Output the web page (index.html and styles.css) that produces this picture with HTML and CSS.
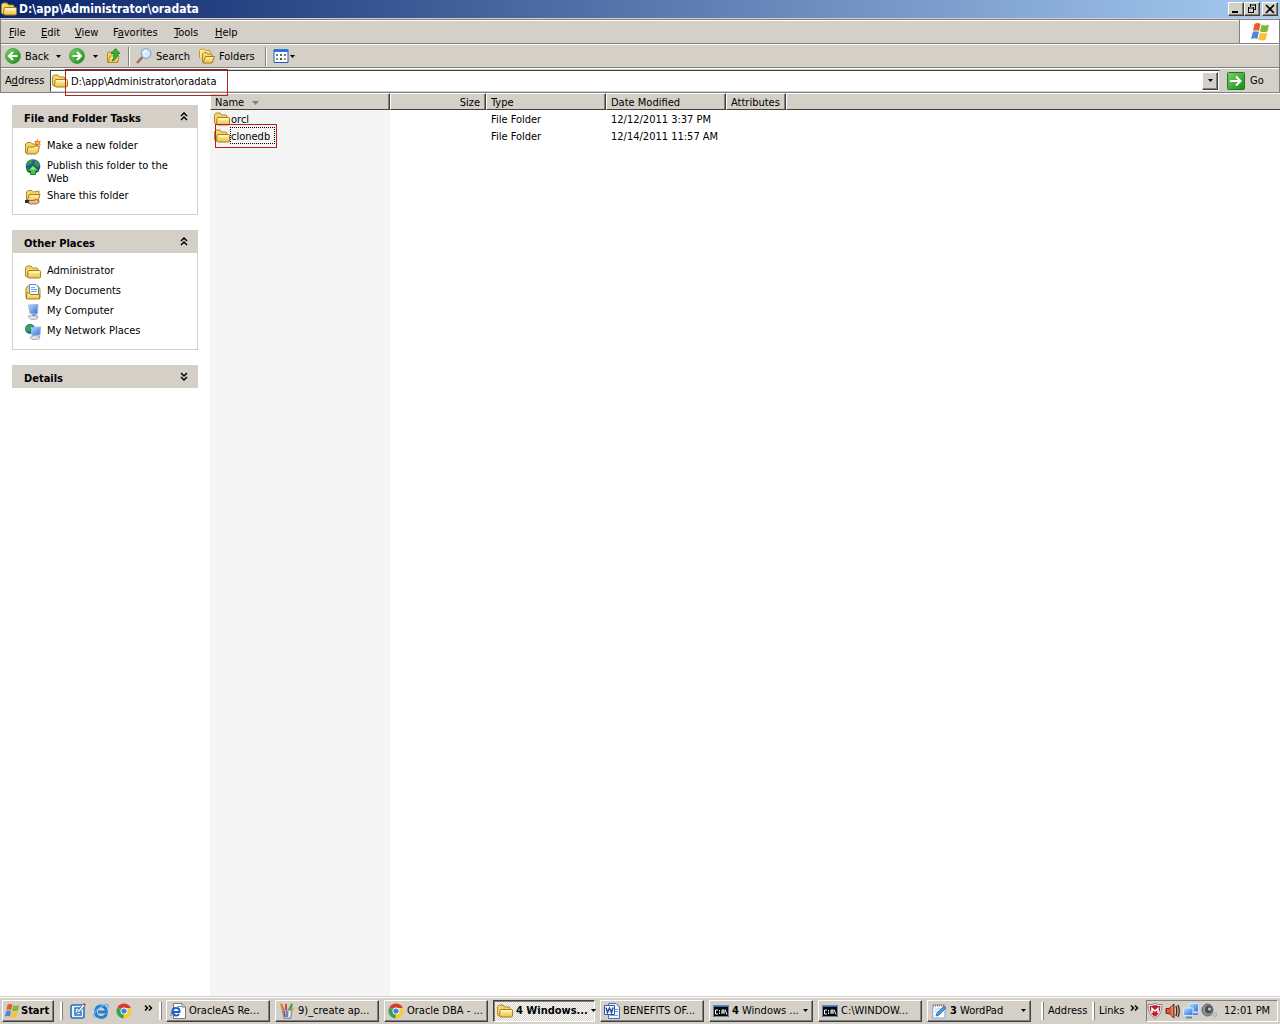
FILE: index.html
```html
<!DOCTYPE html>
<html lang="en">
<head>
<meta charset="utf-8">
<title>D:\app\Administrator\oradata</title>
<link rel="stylesheet" href="styles.css">
</head>
<body>
<svg class="defs" aria-hidden="true">
  <defs>
    <linearGradient id="gold" x1="0" y1="0" x2="0" y2="1"><stop offset="0" stop-color="#fff6a8"/><stop offset="1" stop-color="#eec04c"/></linearGradient>
    <linearGradient id="green" x1="0" y1="0" x2="1" y2="1"><stop offset="0" stop-color="#7fd06a"/><stop offset="1" stop-color="#138a18"/></linearGradient>
    <linearGradient id="screen" x1="0" y1="0" x2="1" y2="1"><stop offset="0" stop-color="#b8dcff"/><stop offset="1" stop-color="#2a6fe0"/></linearGradient>
  </defs>
  <symbol id="folder" viewBox="0 0 16 16">
    <path d="M.5 12V3.500L2 2H6l1.500 2H12l1 1v8H2z" fill="#f3d569" stroke="#b18a2c"/>
    <path d="M3 7.500Q3 6.500 4 6.500H14.500Q15.500 6.500 15.500 7.500V13L14.500 14H4L2.500 13z" fill="url(#gold)" stroke="#a87c1e"/>
    <path d="M4 8h10" stroke="#fffbd8"/>
  </symbol>
  <symbol id="folder-open" viewBox="0 0 16 16">
    <path d="M1 13V4l1.500-1.500H6L7.500 4H12v3" fill="#f3d569" stroke="#b18a2c"/>
    <path d="M1.500 14L4.500 7H15l-2.500 7z" fill="url(#gold)" stroke="#a87c1e"/>
  </symbol>
  <symbol id="folders" viewBox="0 0 16 16">
    <path d="M.5 10V2.500L2 1h3l1.500 1.500H11V5" fill="#fbe88c" stroke="#c59a35"/>
    <path d="M3.500 14V6L5 4.500h2.500L9 6h4v2" fill="#f3d569" stroke="#b18a2c"/>
    <path d="M4 15l2.500-6.500H15.500L13 15z" fill="url(#gold)" stroke="#a87c1e"/>
  </symbol>
  <symbol id="folder-new" viewBox="0 0 16 16">
    <path d="M.5 14V5L2 3.500h4L7.500 5H12v3" fill="#f3d569" stroke="#b18a2c"/>
    <path d="M1.500 15L3 8h6l1-1h4.500L13 13l-2 2z" fill="url(#gold)" stroke="#a87c1e"/>
    <path d="M12.500 0l1 2.300L16 2l-1.500 2L16 6l-2.500-.4L12.500 8l-1-2.400L9 6l1.500-2L9 2l2.500.3z" fill="#f0641e"/>
    <circle cx="12.500" cy="4" r="1.300" fill="#ffd23c"/>
  </symbol>
  <symbol id="folder-share" viewBox="0 0 16 16">
    <path d="M1.500 11V3L3 1.500h4L8.500 3 14 2v4" fill="#f3d569" stroke="#b18a2c"/>
    <path d="M2 12L4.500 5.500H15L13 12z" fill="url(#gold)" stroke="#a87c1e"/>
    <path d="M3 11.500h5l3-1 3 1v2L11 15H5l-2-1z" fill="#f1b98a" stroke="#8a5428" stroke-width=".8"/>
    <path d="M0 11h4v3H0z" fill="#27313f"/>
  </symbol>
  <symbol id="globe-up" viewBox="0 0 16 16">
    <circle cx="8" cy="7.500" r="7.300" fill="#23589c"/>
    <path d="M2 3Q5 0 8 1L7 4 4 6 1 7zM10 1q4 1 5 5l-3 2-3-3zM1 9l3 1v4Q1 12 1 9z" fill="#3d9545"/>
    <path d="M8 6l6 6h-3.500v3.500h-5V12H2z" fill="#42c842" stroke="#0b6f18" stroke-width=".8"/>
    <path d="M8 7.500l3 3H5z" fill="#a5ea90"/>
  </symbol>
  <symbol id="documents" viewBox="0 0 16 16">
    <path d="M1 14V4l2-2h10l2 3v9z" fill="#f3d569" stroke="#b18a2c"/>
    <path d="M4.500.5H11l2.500 2.500v8h-9z" fill="#f4faff" stroke="#5d8fc8"/>
    <path d="M6 3.500h4M6 5.500h6M6 7.500h6" stroke="#79aee8"/>
    <path d="M1.500 9h3l1 1.500h9V15h-13z" fill="url(#gold)" stroke="#a87c1e"/>
  </symbol>
  <symbol id="computer" viewBox="0 0 16 16">
    <path d="M3.500 1l9.500-.5L12.500 10 5 9.500z" fill="url(#screen)" stroke="#a3b4cb"/>
    <path d="M7 10h4l.5 2H7z" fill="#8fa0b8"/>
    <path d="M3 12.500L6 11.500l7 1-1 2.500-6 .5z" fill="#e3e8f0" stroke="#8b99ae" stroke-width=".8"/>
  </symbol>
  <symbol id="network" viewBox="0 0 16 16">
    <circle cx="5" cy="5" r="5" fill="#2868b8"/>
    <path d="M1 3Q4 0 7 1L6 5 3 8 0 6z" fill="#37a83d"/>
    <path d="M6 3.500L15.500 3 15 11l-8 .5z" fill="url(#screen)" stroke="#a3b4cb"/>
    <path d="M5 13.500l4-2 6 1-1 2.500-7 .5z" fill="#e3e8f0" stroke="#8b99ae" stroke-width=".8"/>
  </symbol>
  <symbol id="back" viewBox="0 0 16 16">
    <circle cx="8" cy="8" r="7.500" fill="url(#green)" stroke="#3a9a35" stroke-width=".8"/>
    <path d="M12.500 8H4.500M8 4L4 8l4 4" fill="none" stroke="#fff" stroke-width="2"/>
  </symbol>
  <symbol id="forward" viewBox="0 0 16 16">
    <circle cx="8" cy="8" r="7.500" fill="url(#green)" stroke="#3a9a35" stroke-width=".8"/>
    <path d="M3.500 8h8M8 4l4 4-4 4" fill="none" stroke="#fff" stroke-width="2"/>
  </symbol>
  <symbol id="up" viewBox="0 0 16 16">
    <path d="M1.500 14V5L3 4h3l1 1.500h5V14z" fill="#f3d569" stroke="#b18a2c"/>
    <path d="M2 14.500L4 8h9l-1.500 6.500z" fill="url(#gold)" stroke="#b18a2c"/>
    <path d="M6 13Q8.500 10 8 5.500H5L9.500.5 14 5.500h-2.500Q12 11 6 13z" fill="#35b535" stroke="#137a1a" stroke-width=".8"/>
  </symbol>
  <symbol id="search" viewBox="0 0 16 16">
    <path d="M1 15l5.500-6" stroke="#a8674a" stroke-width="2.500"/>
    <circle cx="10" cy="5.500" r="4.800" fill="#d5ecff" stroke="#86a9d8" stroke-width="1.300"/>
    <path d="M7.500 5q.5-2 2.500-2" fill="none" stroke="#fff" stroke-width="1.500"/>
  </symbol>
  <symbol id="views" viewBox="0 0 16 16">
    <path d="M1 1.500h14v13H1z" fill="#fff" stroke="#1e5bb8"/>
    <path d="M1 1h14v3H1z" fill="#2e74dc"/>
    <path d="M3 6h2v2H3zM11 6h2v2h-2z" fill="#4c79c0"/><path d="M7 6h2v2H7z" fill="#39803f"/>
    <path d="M3 10h2v2H3z" fill="#70a04a"/><path d="M7 10h2v2H7z" fill="#344e86"/><path d="M11 10h2v2h-2z" fill="#d08b48"/>
  </symbol>
  <symbol id="go" viewBox="0 0 18 18">
    <rect x=".5" y=".5" width="17" height="17" rx="1" fill="url(#green)" stroke="#1b7d22"/>
    <path d="M3 9h10M9 4.500L13.500 9 9 13.500" fill="none" stroke="#fff" stroke-width="2"/>
  </symbol>
  <symbol id="windows" viewBox="0 0 20 20">
    <path d="M4.500 2q3-1.800 6 0L9 9Q6 7.500 3 9z" fill="#ea5a2b"/>
    <path d="M11.500 2.700q3 1.500 7.500 0L17.500 9.500q-4 1.500-7.500 0z" fill="#7cba3c"/>
    <path d="M2.800 10q3-1.500 6 0L7.300 17q-3-1.600-6.300 0z" fill="#4b88dc"/>
    <path d="M9.800 10.700q3.500 1.500 7.500 0L15.800 17.500q-4 1.800-7.500 0z" fill="#f8c32e"/>
  </symbol>
  <symbol id="desktop" viewBox="0 0 16 16">
    <rect x="1" y="2" width="13" height="13" rx="2" fill="#e8f3ff" stroke="#2372b8" stroke-width="1.600"/>
    <path d="M11 5H5v7h6V9H8" fill="none" stroke="#2879c4" stroke-width="1.500"/>
    <path d="M7 9l6-8 2 1.500-6 7-2.500 1z" fill="#fff" stroke="#285e9a" stroke-width=".8"/>
    <path d="M13 1l1-1 2 1.500L15 3z" fill="#d9442e"/>
  </symbol>
  <symbol id="ie" viewBox="0 0 16 16">
    <path d="M13.500 11Q12 14.500 8 14.500 2.500 14 2.500 8.500 3 3 8 3t5.500 6H5" fill="none" stroke="#2380d8" stroke-width="2.800"/>
    <path d="M1.500 14.500Q-1 11 5 6T14.500 1.500q1.500 1 .5 3" fill="none" stroke="#66b4f2" stroke-width="1.300"/>
  </symbol>
  <symbol id="ie-page" viewBox="0 0 16 16">
    <path d="M3.500.5H12l3.500 3.500v11.500h-12z" fill="#fff" stroke="#777"/>
    <path d="M12 .5V4h3.500" fill="#ddd" stroke="#777"/>
    <path d="M9 11q-1 2-3.500 1.500T2.500 8.500 6 5t3.500 4H4" fill="none" stroke="#1c58c8" stroke-width="1.900"/>
    <path d="M.8 13Q0 9 5 5.500T11 4" fill="none" stroke="#3c82e0"/>
  </symbol>
  <symbol id="chrome" viewBox="0 0 16 16">
    <path d="M8 8L1.500 4.200A7.500 7.500 0 0 1 14.800 5H8z" fill="#dc3b2b"/>
    <path d="M8 8l6.800-3A7.500 7.500 0 0 1 7.500 15.500z" fill="#f8cb28"/>
    <path d="M8 8l-.5 7.500A7.500 7.500 0 0 1 1.500 4.200z" fill="#3ba44a"/>
    <circle cx="8" cy="8" r="3.500" fill="#fff"/><circle cx="8" cy="8" r="2.600" fill="#3c82de"/>
  </symbol>
  <symbol id="paint" viewBox="0 0 16 16">
    <path d="M3 7L1 1l2-.5L6 7z" fill="#e27b24"/><path d="M6 7V1h2v6z" fill="#d7483d"/><path d="M9 7l3-6.500L14 1l-2 7z" fill="#4a9c48"/><path d="M10 8l4-4 1 1-2 4z" fill="#e4a82c"/>
    <path d="M3 7h10l-1 8.500H5z" fill="#b6c4d6" stroke="#76869c" stroke-width=".8"/>
    <path d="M5 8l1 6" stroke="#c4382d" stroke-width="1.500"/><path d="M8 8v6" stroke="#4573be" stroke-width="1.500"/><path d="M11 8l-1 6" stroke="#fff"/>
  </symbol>
  <symbol id="word" viewBox="0 0 16 16">
    <path d="M4.500.5H12L15.500 4v11.500h-11z" fill="#edf4ff" stroke="#4a6db4"/>
    <path d="M11 6.500h3M11 8.500h3M6 12.500h8" stroke="#7b9bd4"/>
    <path d="M.5 2.500h10v9H.5z" fill="#fff" stroke="#2d57a8"/>
    <path d="M2 4.500L3.500 9.500 5.500 5l2 4.500L9 4.500" fill="none" stroke="#234ba0" stroke-width="1.500"/>
  </symbol>
  <symbol id="cmd" viewBox="0 0 16 16">
    <path d="M0 2h16v12H0z" fill="#05080c"/><path d="M0 2h16v2H0z" fill="#2f69b8"/><path d="M.5 2.500h15v11H.5z" fill="none" stroke="#6b86aa"/>
    <path d="M5 7H2.500v4H5M11 11V7H9v4M9 9h2M12 6.500l2 5" fill="none" stroke="#fff"/><path d="M6.500 7v1.500M6.500 9.500V11" stroke="#fff"/>
  </symbol>
  <symbol id="wordpad" viewBox="0 0 16 16">
    <path d="M2 2h12v13H1.500z" fill="#f8fcff" stroke="#83a9cc"/><path d="M2 2.500h12" stroke="#9a7938" stroke-width="2" stroke-dasharray="1 1"/>
    <path d="M4 6h7M4 8.500h5" stroke="#b0cbe2"/><path d="M5 13l1-3 7-7 2 2-7 7z" fill="#4e9be4" stroke="#2a68ac" stroke-width=".8"/>
  </symbol>
  <symbol id="shield" viewBox="0 0 16 16">
    <path d="M1 1.500Q5 2 8 .5 11 2 15 1.500 15.500 11 8 15.500.5 11 1 1.500z" fill="#fff" stroke="#6c6c6c" stroke-width=".8"/>
    <path d="M2.500 3Q5 3 8 2q3 1 5.500 1Q13.500 10.500 8 14 2.500 10.500 2.500 3z" fill="#c0202e"/>
    <path d="M5 10V5.500L8 8l3-2.500V10" fill="none" stroke="#fff" stroke-width="1.600"/>
  </symbol>
  <symbol id="speaker" viewBox="0 0 16 16">
    <path d="M1 5.500h3L9 1v14l-5-4.500H1z" fill="#d75932" stroke="#712b18"/><path d="M7 3v10" stroke="#f6a27a"/>
    <path d="M11 3q1.500 5 0 10M13 2q2.500 6 0 12" fill="none" stroke="#3e2318" stroke-width="1.300"/>
  </symbol>
  <symbol id="lan" viewBox="0 0 16 16">
    <path d="M6 .5h9.500V9H6z" fill="url(#screen)" stroke="#d8e8f8"/><path d="M.5 5H10v7.500H.5z" fill="url(#screen)" stroke="#d8e8f8"/>
    <path d="M3 14.500h6M10 11h5" stroke="#5e8cc8" stroke-width="2"/>
  </symbol>
  <symbol id="volume" viewBox="0 0 16 16">
    <ellipse cx="6.500" cy="7" rx="5.500" ry="6" fill="#8e9298" stroke="#5b5e62"/><ellipse cx="7.500" cy="6.500" rx="3.500" ry="4" fill="#4b4e52"/><circle cx="8.500" cy="6" r="1.500" fill="#c8ccd2"/>
    <path d="M11 13q3-1 3-4M12.500 15q3.500-2 3.500-5" fill="none" stroke="#9aa0dc"/>
  </symbol>
  <symbol id="caret" viewBox="0 0 5 3"><path d="M0 0h5L2.500 3z"/></symbol>
  <symbol id="fold" viewBox="0 0 8 9"><path d="M1 4l3-3 3 3M1 8l3-3 3 3" fill="none" stroke="#000" stroke-width="1.500"/></symbol>
  <symbol id="unfold" viewBox="0 0 8 9"><path d="M1 1l3 3 3-3M1 5l3 3 3-3" fill="none" stroke="#000" stroke-width="1.500"/></symbol>
  <symbol id="more" viewBox="0 0 9 6"><path d="M1 .5L3.500 3 1 5.500M5 .5L7.500 3 5 5.500" fill="none" stroke="#000" stroke-width="1.500"/></symbol>
</svg>

<header class="titlebar">
  <svg class="icon"><use href="#folder"/></svg>
  <h1>D:\app\Administrator\oradata</h1>
  <div class="window-buttons">
    <button aria-label="Minimize"><svg viewBox="0 0 10 10"><path d="M1 8h6" stroke="#000" stroke-width="2"/></svg></button>
    <button aria-label="Restore"><svg viewBox="0 0 10 10"><path d="M3 1h6M3.500 0v3M8.500 0v6M6 5.500h3M1 4h6M1.500 3v6M6.500 3v6M1 8.500h6" fill="none" stroke="#000"/></svg></button>
    <button class="close" aria-label="Close"><svg viewBox="0 0 10 10"><path d="M1 1l8 8M9 1L1 9" stroke="#000" stroke-width="1.600"/></svg></button>
  </div>
</header>

<div class="bars">
  <nav class="menubar">
    <div class="menus">
      <button><u>F</u>ile</button><button><u>E</u>dit</button><button><u>V</u>iew</button><button>F<u>a</u>vorites</button><button><u>T</u>ools</button><button><u>H</u>elp</button>
    </div>
    <div class="brand"><svg><use href="#windows"/></svg></div>
  </nav>
  <div class="toolbar">
    <button class="tool back"><svg class="icon"><use href="#back"/></svg>Back<svg class="caret"><use href="#caret"/></svg></button>
    <button class="tool next" aria-label="Forward"><svg class="icon"><use href="#forward"/></svg><svg class="caret"><use href="#caret"/></svg></button>
    <button class="tool" aria-label="Up"><svg class="icon"><use href="#up"/></svg></button>
    <span class="separator"></span>
    <button class="tool find"><svg class="icon"><use href="#search"/></svg>Search</button>
    <button class="tool tree"><svg class="icon"><use href="#folders"/></svg>Folders</button>
    <span class="separator"></span>
    <button class="tool views" aria-label="Views"><svg class="icon"><use href="#views"/></svg><svg class="caret"><use href="#caret"/></svg></button>
  </div>
  <form class="addressbar">
    <label for="address">A<u>d</u>dress</label>
    <div class="combo">
      <svg class="icon"><use href="#folder"/></svg>
      <input id="address" type="text" value="D:\app\Administrator\oradata">
      <button type="button" aria-label="Address history"><svg class="caret"><use href="#caret"/></svg></button>
      <span class="mark mark-address"></span>
    </div>
    <button type="button" class="go"><svg><use href="#go"/></svg>Go</button>
  </form>
</div>

<main class="content">
  <aside class="tasks">
    <section class="panel">
      <h2>File and Folder Tasks<svg><use href="#fold"/></svg></h2>
      <ul>
        <li><svg class="icon"><use href="#folder-new"/></svg><a href="#">Make a new folder</a></li>
        <li><svg class="icon"><use href="#globe-up"/></svg><a href="#">Publish this folder to the Web</a></li>
        <li><svg class="icon"><use href="#folder-share"/></svg><a href="#">Share this folder</a></li>
      </ul>
    </section>
    <section class="panel">
      <h2>Other Places<svg><use href="#fold"/></svg></h2>
      <ul>
        <li><svg class="icon"><use href="#folder"/></svg><a href="#">Administrator</a></li>
        <li><svg class="icon"><use href="#documents"/></svg><a href="#">My Documents</a></li>
        <li><svg class="icon"><use href="#computer"/></svg><a href="#">My Computer</a></li>
        <li><svg class="icon"><use href="#network"/></svg><a href="#">My Network Places</a></li>
      </ul>
    </section>
    <section class="panel">
      <h2>Details<svg><use href="#unfold"/></svg></h2>
    </section>
  </aside>
  <div class="files">
    <table>
      <colgroup><col class="c-name"><col class="c-size"><col class="c-type"><col class="c-date"><col class="c-attr"><col></colgroup>
      <thead>
        <tr><th>Name<svg class="sort" viewBox="0 0 7 4"><path d="M0 0h7L3.500 4z" fill="#808080"/></svg></th><th class="size">Size</th><th>Type</th><th>Date Modified</th><th>Attributes</th><th></th></tr>
      </thead>
      <tbody>
        <tr><td><div class="file"><svg class="icon"><use href="#folder"/></svg><span class="name">orcl</span></div></td><td></td><td>File Folder</td><td>12/12/2011 3:37 PM</td><td></td><td></td></tr>
        <tr><td><div class="file"><svg class="icon"><use href="#folder"/></svg><span class="name focused">clonedb</span><span class="mark mark-file"></span></div></td><td></td><td>File Folder</td><td>12/14/2011 11:57 AM</td><td></td><td></td></tr>
      </tbody>
    </table>
  </div>
</main>

<footer class="taskbar">
  <button class="start"><svg><use href="#windows"/></svg>Start</button>
  <span class="grip"></span>
  <div class="quick">
    <button aria-label="Show Desktop"><svg class="icon"><use href="#desktop"/></svg></button>
    <button aria-label="Internet Explorer"><svg class="icon"><use href="#ie"/></svg></button>
    <button aria-label="Chrome"><svg class="icon"><use href="#chrome"/></svg></button>
    <button aria-label="More"><svg class="more"><use href="#more"/></svg></button>
  </div>
  <span class="grip"></span>
  <div class="windows">
    <button><svg class="icon"><use href="#ie-page"/></svg><span>OracleAS Re...</span></button>
    <button><svg class="icon"><use href="#paint"/></svg><span>9)_create ap...</span></button>
    <button><svg class="icon"><use href="#chrome"/></svg><span>Oracle DBA - ...</span></button>
    <button class="active"><svg class="icon"><use href="#folder"/></svg><span>4 Windows...</span><svg class="caret"><use href="#caret"/></svg></button>
    <button><svg class="icon"><use href="#word"/></svg><span>BENEFITS OF...</span></button>
    <button><svg class="icon"><use href="#cmd"/></svg><span><b>4</b>&nbsp;Windows ...</span><svg class="caret"><use href="#caret"/></svg></button>
    <button><svg class="icon"><use href="#cmd"/></svg><span>C:\WINDOW...</span></button>
    <button><svg class="icon"><use href="#wordpad"/></svg><span><b>3</b>&nbsp;WordPad</span><svg class="caret"><use href="#caret"/></svg></button>
  </div>
  <div class="bands">
    <span class="grip"></span><span class="band-address">Address</span>
    <span class="grip"></span><span>Links</span>
    <button aria-label="More links"><svg class="more"><use href="#more"/></svg></button>
  </div>
  <div class="tray">
    <svg class="icon"><use href="#shield"/></svg><svg class="icon"><use href="#speaker"/></svg><svg class="icon"><use href="#lan"/></svg><svg class="icon"><use href="#volume"/></svg>
    <time>12:01 PM</time>
  </div>
</footer>
</body>
</html>
```

FILE: styles.css
```css
* { box-sizing: border-box; }
body {
  margin: 0;
  min-height: 100vh;
  display: flex;
  flex-direction: column;
  background: #fff;
  color: #000;
  font: 11px/13px "DejaVu Sans Condensed", "DejaVu Sans", sans-serif;
}
button, input { font: inherit; color: inherit; }
button { border: 0; padding: 0; margin: 0; background: none; }
svg { display: block; flex: none; }
.defs { position: absolute; width: 0; height: 0; }
.icon { width: 16px; height: 16px; }
.caret { width: 5px; height: 3px; }
.more { width: 9px; height: 6px; }
u { text-underline-offset: 1px; }

.titlebar {
  display: flex;
  align-items: center;
  height: 18px;
  padding: 0 2px 0 1px;
  gap: 2px;
  background: linear-gradient(90deg, #0a246a, #a6caf0);
}
.titlebar h1 { flex: 1; margin: 0; font-size: 12px; color: #fff; }
.window-buttons { display: flex; }
.window-buttons button, .combo button {
  display: grid;
  place-items: center;
  width: 16px;
  height: 14px;
  background: #d4d0c8;
  border: 1px solid;
  border-color: #fff #404040 #404040 #fff;
  box-shadow: inset -1px -1px #808080;
}
.window-buttons svg { width: 10px; height: 10px; }
.window-buttons .close { margin-left: 2px; }

.bars {
  background: #d4d0c8;
  border: 1px solid #808080;
  border-top-color: #d4d0c8;
}
.menubar, .toolbar, .addressbar {
  display: flex;
  align-items: center;
  height: 24px;
  border-top: 1px solid #fff;
  border-bottom: 1px solid #808080;
}
.menubar { height: 25px; border-top-color: #808080; box-shadow: inset 0 1px #fff; }
.addressbar { border-bottom: 0; }
.menus {
  flex: 1;
  display: grid;
  grid-template-columns: 32px 34px 38px 61px 41px 40px;
  padding: 2px 0 0 8px;
}
.menus button { text-align: left; }
.brand {
  display: grid;
  place-items: center;
  width: 40px;
  height: 23px;
  background: #fff;
  border-left: 1px solid #808080;
}
.brand svg { width: 20px; height: 20px; }
.toolbar { padding-left: 4px; }
.tool { display: flex; align-items: center; gap: 4px; }
.back { width: 64px; }
.next { width: 37px; }
.back .caret { margin-left: auto; margin-right: 8px; }
.next .caret { margin-left: 4px; }
.separator { width: 2px; height: 19px; background: #808080; border-right: 1px solid #fff; }
.toolbar .separator { margin: 0 6px; }
.find { width: 63px; }
.tree { width: 60px; }
.views { gap: 1px; }

.addressbar label { width: 49px; padding-left: 4px; }
.combo {
  position: relative;
  flex: 1;
  display: flex;
  align-items: center;
  height: 22px;
  padding: 0 1px 0 1px;
  background: #fff;
  border: 1px solid;
  border-color: #404040 #d4d0c8 #d4d0c8 #404040;
  gap: 3px;
}
.combo input { flex: 1; min-width: 0; border: 0; padding: 1px 0 0; outline: 0; background: none; }
.combo button { height: 18px; }
.go { display: flex; align-items: center; gap: 5px; width: 59px; padding-left: 7px; }
.go svg { width: 18px; height: 18px; }
.mark { position: absolute; border: 1px solid #b8201c; pointer-events: none; }
.mark-address { left: 14px; top: -2px; width: 163px; height: 27px; }

.content { flex: 1; display: flex; }
.tasks { width: 210px; padding: 12px; display: flex; flex-direction: column; gap: 15px; }
.panel { border: 1px solid #d4d0c8; border-top: 0; }
.panel h2 {
  display: flex;
  align-items: center;
  justify-content: space-between;
  height: 23px;
  margin: 0 -1px;
  padding: 3px 10px 0 12px;
  font-size: 11px;
  background: #d4d0c8;
}
.panel h2 svg { width: 8px; height: 9px; margin-bottom: 4px; }
.panel:last-child { border: 0; }
.panel:last-child h2 { margin: 0; }
.panel ul { margin: 0; padding: 11px 12px 9px; list-style: none; display: grid; gap: 4px; }
.panel li { display: flex; gap: 6px; min-height: 16px; }
.panel a { color: inherit; text-decoration: none; }

.files { flex: 1; background: linear-gradient(90deg, #f5f5f5 180px, #fff 180px); }
.files table { width: 100%; table-layout: fixed; border-collapse: separate; border-spacing: 0; }
.c-name { width: 180px; }
.c-size { width: 96px; }
.c-type, .c-date { width: 120px; }
.c-attr { width: 60px; }
th {
  height: 17px;
  padding: 1px 5px 0 4px;
  text-align: left;
  font-weight: normal;
  white-space: nowrap;
  background: #d4d0c8;
  border: 1px solid;
  border-color: #fff #404040 #404040 #fff;
  box-shadow: inset -1px 0 #808080;
}
th:last-child { border-right: 0; box-shadow: none; }
th.size { text-align: right; }
.sort { display: inline-block; width: 7px; height: 4px; margin-left: 8px; vertical-align: 1px; }
td { height: 17px; padding: 1px 5px 0; white-space: nowrap; }
td:first-child { padding: 0 4px; }
.file { position: relative; display: flex; align-items: center; height: 17px; }
.name { height: 17px; padding-top: 2px; border: 1px solid transparent; }
.focused { width: 45px; border: 1px dotted #000; }
.name { line-height: 13px; }
.mark-file { left: 1px; top: -3px; width: 62px; height: 24px; }

.taskbar {
  display: flex;
  align-items: center;
  height: 28px;
  padding: 1px 2px;
  background: #d4d0c8;
  border-top: 1px solid #d4d0c8;
  box-shadow: inset 0 1px #fff;
}
.start, .windows button {
  display: flex;
  align-items: center;
  height: 22px;
  border: 1px solid;
  border-color: #fff #404040 #404040 #fff;
  box-shadow: inset -1px -1px #808080;
}
.start { width: 52px; padding-left: 1px; gap: 1px; font-weight: bold; }
.start svg { width: 16px; height: 16px; }
.grip { width: 3px; height: 18px; background: #fff; border-right: 1px solid #808080; }
.start + .grip { margin: 0 7px 0 6px; }
.quick { display: flex; align-items: center; gap: 7px; width: 89px; }
.quick button:last-child { margin: 0 0 6px 5px; }
.quick + .grip { margin-right: 4px; }
.windows { flex: 1; display: flex; gap: 5px; }
.windows button { flex: 1; min-width: 0; padding: 0 4px 0 3px; gap: 3px; white-space: nowrap; }
.windows .caret { margin-left: auto; }
.windows .active {
  padding-right: 2px;
  font-weight: bold;
  background: repeating-conic-gradient(#fff 0 25%, #d4d0c8 0 50%) 0 0 / 2px 2px;
  border-color: #404040 #fff #fff #404040;
  box-shadow: inset 1px 1px #808080;
}
.bands { display: flex; align-items: center; gap: 4px; width: 115px; padding-left: 10px; }
.band-address { width: 40px; }
.bands button { margin: 0 0 6px 2px; }
.tray {
  display: flex;
  align-items: center;
  gap: 2px;
  height: 22px;
  width: 132px;
  border: 1px solid;
  border-color: #808080 #fff #fff #808080;
}
.tray time { margin-left: 5px; white-space: nowrap; }
```
